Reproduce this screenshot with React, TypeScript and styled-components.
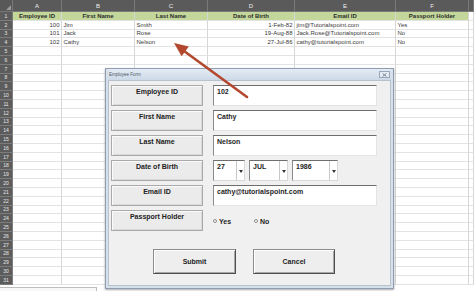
import React from 'react';
import styled, { createGlobalStyle } from 'styled-components';

const Global = createGlobalStyle`
  *, *::before, *::after { box-sizing: border-box; }
  html, body { margin: 0; padding: 0; background: #fff; }
  body { width: 474px; height: 291px; overflow: hidden; font-family: "Liberation Sans", Arial, sans-serif; }
`;

const Screen = styled.div`
  position: relative;
  width: 474px;
  height: 291px;
  overflow: hidden;
  display: flex;
  flex-direction: column;
  background: #fff;
`;

const Sheet = styled.div`
  display: grid;
  grid-template-columns: 13px 49px 73px 73px 87px 101px 73px 1fr;
  grid-template-rows: 12px repeat(31, 8.8px);
`;

const Corner = styled.div`
  background: #585858;
  border-right: 1px solid #777;
  border-bottom: 1px solid #777;
  display: flex;
  align-items: flex-end;
  justify-content: flex-end;
  padding: 1px;
`;

const ColHead = styled.div`
  background: #5a5a5a;
  color: #f0f0f0;
  font-size: 6px;
  display: flex;
  align-items: center;
  justify-content: center;
  border-right: 1px solid #7a7a7a;
  border-bottom: 1px solid #7a7a7a;
`;

const RowHead = styled.div`
  background: #5c5c5c;
  color: #e8e8e8;
  font-size: 5px;
  display: flex;
  align-items: center;
  justify-content: center;
  border-bottom: 1px solid #7c7c7c;
  border-right: 1px solid #7c7c7c;
`;

const Cell = styled.div<{ $align?: 'left' | 'right' | 'center'; $head?: boolean }>`
  border-right: 1px solid #d6d6d6;
  border-bottom: 1px solid #e3e3e3;
  background: ${p => (p.$head ? '#c4d79b' : '#fff')};
  font-size: 6px;
  font-weight: ${p => (p.$head ? 700 : 400)};
  color: ${p => (p.$head ? '#2c2c2c' : '#3a3a3a')};
  display: flex;
  align-items: center;
  justify-content: ${p => (p.$align === 'right' ? 'flex-end' : p.$align === 'center' ? 'center' : 'flex-start')};
  padding: 0 1.5px;
  white-space: nowrap;
  overflow: visible;
  line-height: 1;
`;

const BottomBar = styled.div`
  flex: 1;
  display: flex;
  background: #fff;
`;

const TabStrip = styled.div`
  width: 97px;
  margin-top: 2px;
  border-top: 1px solid #bdbdbd;
  border-right: 1px solid #bdbdbd;
  background: #f7f7f7;
`;

/* ---------- Dialog ---------- */

const Dialog = styled.div`
  position: absolute;
  left: 105px;
  top: 68px;
  width: 289px;
  height: 221px;
  border: 1px solid #8f9db0;
  background: #d6e0eb;
  box-shadow: 0 1px 2px rgba(0, 0, 0, 0.35);
  display: flex;
  flex-direction: column;
  padding: 0 2px 2px 2px;
  font-family: "Liberation Sans", Arial, sans-serif;
`;

const TitleBar = styled.div`
  height: 11px;
  display: flex;
  align-items: center;
  justify-content: space-between;
  padding: 0 1px 0 1px;
  font-size: 4.5px;
  color: #4d5663;
  background: linear-gradient(#e4ecf5, #ccd9e7);
`;

const CloseBox = styled.div`
  width: 11px;
  height: 7px;
  border: 1px solid #9aa7b8;
  background: #e7edf4;
  display: flex;
  align-items: center;
  justify-content: center;
`;

const Body = styled.div`
  flex: 1;
  background: #f0f0f0;
  border: 1px solid #b7c2cf;
  padding: 4px 0 0 2px;
  display: flex;
  flex-direction: column;
`;

const FormGrid = styled.div`
  display: grid;
  grid-template-columns: 92px 164px;
  grid-auto-rows: 21px;
  column-gap: 10px;
  row-gap: 4px;
`;

const LabelBox = styled.div`
  background: #ebebeb;
  border: 1px solid #a9a9a9;
  box-shadow: inset 1px 1px 0 #fbfbfb, inset -1px -1px 0 #d9d9d9;
  font-size: 7px;
  font-weight: 700;
  color: #222;
  text-align: center;
  padding-top: 2px;
  line-height: 8px;
`;

const TextBox = styled.div`
  background: #fff;
  border-top: 1px solid #6e6e6e;
  border-left: 1px solid #8a8a8a;
  border-right: 1px solid #e4e4e4;
  border-bottom: 1px solid #e4e4e4;
  font-size: 7px;
  font-weight: 700;
  color: #1e1e1e;
  padding: 2px 3px;
  line-height: 8px;
`;

const ComboRow = styled.div`
  display: flex;
  gap: 4px;
`;

const Combo = styled.div<{ $w: number }>`
  width: ${p => p.$w}px;
  display: flex;
  background: #fff;
  border-top: 1px solid #6e6e6e;
  border-left: 1px solid #8a8a8a;
  border-right: 1px solid #d8d8d8;
  border-bottom: 1px solid #d8d8d8;
`;

const ComboText = styled.div`
  flex: 1;
  font-size: 7px;
  font-weight: 700;
  color: #1e1e1e;
  padding: 2px 3px;
  line-height: 8px;
`;

const DropBtn = styled.div`
  width: 8px;
  border-left: 1px solid #c9c9c9;
  display: flex;
  align-items: center;
  justify-content: center;
  padding-top: 2px;
`;

const RadioRow = styled.div`
  display: flex;
  align-items: center;
  padding-top: 1px;
`;

const RadioItem = styled.label<{ $w: number }>`
  width: ${p => p.$w}px;
  display: flex;
  align-items: center;
  gap: 2px;
  font-size: 7px;
  font-weight: 700;
  color: #1e1e1e;
`;

const RadioDot = styled.span<{ $on?: boolean }>`
  width: 4px;
  height: 4px;
  border-radius: 50%;
  border: 1px solid #8c8c8c;
  background: ${p => (p.$on ? 'radial-gradient(circle, #333 0 40%, #fff 45%)' : '#fff')};
`;

const ButtonRow = styled.div`
  display: flex;
  gap: 17px;
  margin-top: 18px;
  padding-left: 42px;
`;

const Btn = styled.button<{ $w: number }>`
  width: ${p => p.$w}px;
  height: 25px;
  background: #eeeeee;
  border: 1px solid #8c8c8c;
  border-right-color: #4e4e4e;
  border-bottom-color: #4e4e4e;
  box-shadow: inset 1px 1px 0 #ffffff, inset -1px -1px 0 #a8a8a8;
  font-family: "Liberation Sans", Arial, sans-serif;
  font-size: 7px;
  font-weight: 700;
  color: #1e1e1e;
  padding: 0;
`;

const Overlay = styled.svg`
  position: absolute;
  left: 0;
  top: 0;
  pointer-events: none;
`;

type C = { t: string; a?: 'left' | 'right' | 'center' };

const letters = ['A', 'B', 'C', 'D', 'E', 'F', ''];
const head = ['Employee ID', 'First Name', 'Last Name', 'Date of Birth', 'Email ID', 'Passport Holder'];
const data: C[][] = [
  [{ t: '100', a: 'right' }, { t: 'Jim' }, { t: 'Smith' }, { t: '1-Feb-82', a: 'right' }, { t: 'jim@Tutorialspoint.com' }, { t: 'Yes' }],
  [{ t: '101', a: 'right' }, { t: 'Jack' }, { t: 'Rose' }, { t: '19-Aug-88', a: 'right' }, { t: 'Jack.Rose@Tutorialspoint.com' }, { t: 'No' }],
  [{ t: '102', a: 'right' }, { t: 'Cathy' }, { t: 'Nelson' }, { t: '27-Jul-86', a: 'right' }, { t: 'cathy@tutorialspoint.com' }, { t: 'No' }],
];

const Arrow = () => (
  <svg width="4" height="3" viewBox="0 0 4 3">
    <path d="M0 0 L4 0 L2 3 Z" fill="#333" />
  </svg>
);

export default function App() {
  const rows: React.ReactNode[] = [];
  for (let r = 1; r <= 31; r++) {
    rows.push(<RowHead key={`h${r}`}>{r}</RowHead>);
    for (let c = 0; c < 7; c++) {
      if (r === 1) {
        rows.push(
          <Cell key={`${r}-${c}`} $head={c < 6} $align="center">
            {c < 6 ? head[c] : ''}
          </Cell>
        );
      } else if (r <= 4 && c < 6) {
        const d = data[r - 2][c];
        rows.push(
          <Cell key={`${r}-${c}`} $align={d.a}>
            {d.t}
          </Cell>
        );
      } else {
        rows.push(<Cell key={`${r}-${c}`} />);
      }
    }
  }

  return (
    <>
      <Global />
      <Screen>
        <Sheet>
          <Corner>
            <svg width="5" height="5" viewBox="0 0 5 5">
              <path d="M5 0 L5 5 L0 5 Z" fill="#9a9a9a" />
            </svg>
          </Corner>
          {letters.map((l, i) => (
            <ColHead key={i}>{l}</ColHead>
          ))}
          {rows}
        </Sheet>
        <BottomBar>
          <TabStrip />
        </BottomBar>

        <Dialog>
          <TitleBar>
            <span>Employee Form</span>
            <CloseBox>
              <svg width="5" height="4" viewBox="0 0 5 4">
                <path d="M0.5 0.5 L4.5 3.5 M4.5 0.5 L0.5 3.5" stroke="#6b7685" strokeWidth="0.8" />
              </svg>
            </CloseBox>
          </TitleBar>
          <Body>
            <FormGrid>
              <LabelBox>Employee ID</LabelBox>
              <TextBox>102</TextBox>
              <LabelBox>First Name</LabelBox>
              <TextBox>Cathy</TextBox>
              <LabelBox>Last Name</LabelBox>
              <TextBox>Nelson</TextBox>
              <LabelBox>Date of Birth</LabelBox>
              <ComboRow>
                <Combo $w={32}>
                  <ComboText>27</ComboText>
                  <DropBtn><Arrow /></DropBtn>
                </Combo>
                <Combo $w={39}>
                  <ComboText>JUL</ComboText>
                  <DropBtn><Arrow /></DropBtn>
                </Combo>
                <Combo $w={46}>
                  <ComboText>1986</ComboText>
                  <DropBtn><Arrow /></DropBtn>
                </Combo>
              </ComboRow>
              <LabelBox>Email ID</LabelBox>
              <TextBox>cathy@tutorialspoint.com</TextBox>
              <LabelBox>Passport Holder</LabelBox>
              <RadioRow>
                <RadioItem $w={41}>
                  <RadioDot />
                  Yes
                </RadioItem>
                <RadioItem $w={40}>
                  <RadioDot $on />
                  No
                </RadioItem>
              </RadioRow>
            </FormGrid>
            <ButtonRow>
              <Btn $w={83}>Submit</Btn>
              <Btn $w={82}>Cancel</Btn>
            </ButtonRow>
          </Body>
        </Dialog>

        <Overlay width="474" height="291" viewBox="0 0 474 291">
          <line x1="247" y1="97" x2="184" y2="51" stroke="#b3482e" strokeWidth="2.6" strokeLinecap="round" />
          <polygon points="174,43 181.6,56.2 188.8,46.6" fill="#b3482e" />
        </Overlay>
      </Screen>
    </>
  );
}
